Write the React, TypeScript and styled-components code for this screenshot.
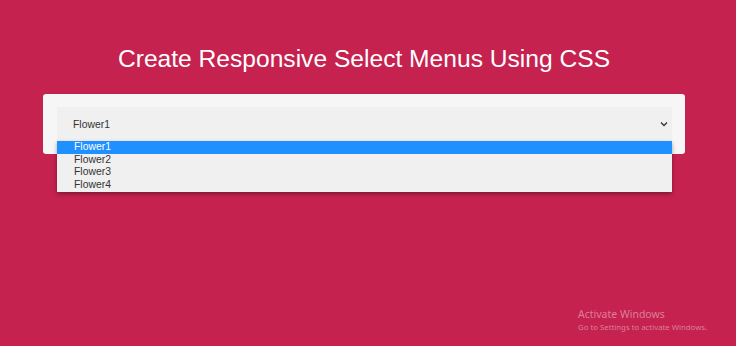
import React, { useState } from 'react';
import styled, { createGlobalStyle } from 'styled-components';

const GlobalStyle = createGlobalStyle`
  html, body {
    margin: 0;
    padding: 0;
    height: 100%;
  }
  body {
    background: #c5224f;
    font-family: 'Liberation Sans', Arial, sans-serif;
  }
`;

const SPage = styled.div`
  width: 736px;
  height: 346px;
  position: relative;
  overflow: hidden;
  padding: 45px 51px 0 43px;
  box-sizing: border-box;
`;

const STitle = styled.h1`
  margin: 0 0 21px;
  text-align: center;
  color: #ffffff;
  font-weight: 400;
  font-size: 24.6px;
  line-height: 28px;
`;

const SCard = styled.div`
  background: #f6f6f6;
  border-radius: 3px;
  padding: 13px 13px 13px 14px;
`;

const SSelectWrap = styled.div`
  position: relative;
`;

const SSelect = styled.div`
  height: 34px;
  background: #f0f0f0;
  display: flex;
  align-items: center;
  justify-content: space-between;
  padding: 0 3px 0 16px;
  color: #333;
  font-size: 10.4px;
  cursor: pointer;
`;

const SChevron = styled.svg`
  width: 10px;
  height: 10px;
`;

const SList = styled.ul`
  position: absolute;
  left: 0;
  right: 0;
  top: 34px;
  margin: 0;
  padding: 0 0 1px;
  list-style: none;
  background: #f0f0f0;
  box-shadow: 0 2px 4px rgba(0, 0, 0, 0.35);
  z-index: 2;
`;

interface IOptionProps {
  active: boolean;
}

const SOption = styled.li<IOptionProps>`
  height: 12.5px;
  line-height: 12.5px;
  padding-left: 17px;
  font-size: 10.4px;
  color: ${({ active }) => (active ? '#ffffff' : '#333')};
  background: ${({ active }) => (active ? '#1e90ff' : 'transparent')};
  cursor: default;
`;

const SWatermark = styled.div`
  position: absolute;
  left: 578px;
  top: 307px;
  color: rgba(255, 255, 255, 0.42);
  font-family: 'Noto Sans', 'Open Sans', sans-serif;
  & p {
    margin: 0;
  }
  & p:first-child {
    font-size: 10.5px;
    line-height: 14px;
  }
  & p:nth-child(2) {
    font-size: 7.8px;
    line-height: 12px;
  }
`;

const options = ['Flower1', 'Flower2', 'Flower3', 'Flower4'];

const App = () => {
  const [selected, setSelected] = useState('Flower1');

  return (
    <SPage>
      <GlobalStyle />
      <STitle>{'Create Responsive Select Menus Using CSS'}</STitle>
      <SCard>
        <SSelectWrap>
          <SSelect>
            <span>{selected}</span>
            <SChevron viewBox="0 0 10 10">
              <path d="M2 3.5 L5 6.5 L8 3.5" fill="none" stroke="#333" strokeWidth="1.3" />
            </SChevron>
          </SSelect>
          <SList>
            {options.map(o => (
              <SOption key={o} active={o === selected} onClick={() => setSelected(o)}>
                {o}
              </SOption>
            ))}
          </SList>
        </SSelectWrap>
      </SCard>
      <SWatermark>
        <p>{'Activate Windows'}</p>
        <p>{'Go to Settings to activate Windows.'}</p>
      </SWatermark>
    </SPage>
  );
};

export default App;
